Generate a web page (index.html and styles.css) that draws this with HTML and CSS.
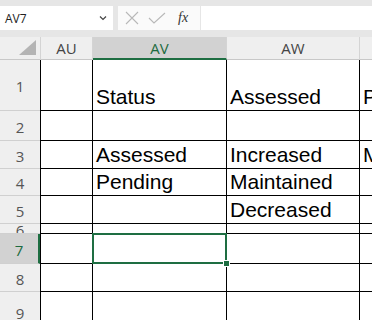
FILE: index.html
```html
<!DOCTYPE html>
<html lang="en">
<head>
    <meta charset="UTF-8">
    <title>Sheet</title>
    <link rel="stylesheet" href="styles.css">
</head>
<body>
    <div class="toolbar">
        <div class="namebox">
            <span>AV7</span>
            <svg class="chev" width="8" height="6" viewBox="0 0 8 6"><path d="M1 1.5 L4 4.5 L7 1.5" fill="none" stroke="#444" stroke-width="1.2"/></svg>
        </div>
        <div class="fxbuttons">
            <svg width="16" height="16" viewBox="0 0 16 16"><path d="M2 2 L14 14 M14 2 L2 14" stroke="#b8b8b8" stroke-width="1.1"/></svg>
            <svg width="18" height="16" viewBox="0 0 18 16"><path d="M1 8 L6 13 L17 3" fill="none" stroke="#b8b8b8" stroke-width="1.1"/></svg>
            <span class="fx">fx</span>
        </div>
        <div class="formula"></div>
    </div>

    <div class="sheet">
        <!-- column headers -->
        <div class="corner"><span class="tri"></span></div>
        <div class="ch first">AU</div>
        <div class="ch active">AV</div>
        <div class="ch">AW</div>
        <div class="ch"></div>

        <div class="rh">1</div>
        <div class="cell first"></div>
        <div class="cell">Status</div>
        <div class="cell">Assessed</div>
        <div class="cell">Previous</div>

        <div class="rh">2</div>
        <div class="cell first"></div>
        <div class="cell"></div>
        <div class="cell"></div>
        <div class="cell"></div>

        <div class="rh">3</div>
        <div class="cell first"></div>
        <div class="cell">Assessed</div>
        <div class="cell">Increased</div>
        <div class="cell">Maintained</div>

        <div class="rh">4</div>
        <div class="cell first"></div>
        <div class="cell">Pending</div>
        <div class="cell">Maintained</div>
        <div class="cell"></div>

        <div class="rh">5</div>
        <div class="cell first"></div>
        <div class="cell"></div>
        <div class="cell">Decreased</div>
        <div class="cell"></div>

        <div class="rh">6</div>
        <div class="cell first"></div>
        <div class="cell"></div>
        <div class="cell"></div>
        <div class="cell"></div>

        <div class="rh active">7</div>
        <div class="cell first"></div>
        <div class="cell selected"><span class="sel"><span class="handle"></span></span></div>
        <div class="cell"></div>
        <div class="cell"></div>

        <div class="rh">8</div>
        <div class="cell first"></div>
        <div class="cell"></div>
        <div class="cell"></div>
        <div class="cell"></div>

        <div class="rh">9</div>
        <div class="cell first"></div>
        <div class="cell"></div>
        <div class="cell"></div>
        <div class="cell"></div>
    </div>
</body>
</html>
```

FILE: styles.css
```css
body {
    margin: 0;
    background-color: #e6e6e6;
    font-family: 'Liberation Sans', Arial, sans-serif;
    overflow: hidden;
    width: 372px;
    height: 320px;
}

.toolbar {
    display: flex;
    height: 24px;
    padding: 6px 0 7px 0;
}

.namebox {
    width: 113px;
    box-sizing: border-box;
    background-color: #fff;
    display: flex;
    align-items: center;
    justify-content: space-between;
    padding: 0 6px 0 5px;
    font-family: 'Open Sans', 'Noto Sans', sans-serif;
    font-size: 12px;
    color: #222;
}

.fxbuttons {
    width: 82px;
    margin-left: 5px;
    background-color: #fafafa;
    display: flex;
    align-items: center;
    gap: 8px;
    padding-left: 6px;
    box-sizing: border-box;
}

.fx {
    font-family: 'Liberation Serif', serif;
    font-style: italic;
    font-size: 14px;
    color: #333;
    margin-left: 4px;
}

.formula {
    flex: 1;
    margin-left: 1px;
    background-color: #fff;
}

.sheet {
    display: grid;
    grid-template-columns: 40px 53px 134px 133px 1fr;
    grid-template-rows: 23px 51px 30px 28px 27px 28px 10px 30px 28px 40px;
    background-color: #fff;
}

.corner {
    background-color: #efefef;
    border-bottom: 1px solid #c8c8c8;
    position: relative;
}

.tri {
    position: absolute;
    right: 4px;
    bottom: 4px;
    width: 0;
    height: 0;
    border-left: 17px solid transparent;
    border-bottom: 15px solid #b4b4b4;
}

.ch {
    background-color: #efefef;
    border-right: 1px solid #d4d4d4;
    border-bottom: 1px solid #c8c8c8;
    display: flex;
    align-items: center;
    justify-content: center;
    font-family: 'Open Sans', 'Noto Sans', sans-serif;
    font-size: 15px;
    color: #444;
    box-sizing: border-box;
}

.ch.first {
    border-left: 1px solid #d4d4d4;
}

.ch.active {
    background-color: #d2d2d2;
    color: #1d6b40;
    border-bottom: 2px solid #1e6e42;
}

.rh {
    background-color: #efefef;
    border-bottom: 1px solid #d0d0d0;
    display: flex;
    align-items: center;
    justify-content: center;
    padding-top: 2px;
    font-family: 'Open Sans', 'Noto Sans', sans-serif;
    font-size: 15px;
    color: #555;
    overflow: hidden;
    box-sizing: border-box;
}

.rh.active {
    background-color: #d2d2d2;
    color: #1d6b40;
    border-right: 2px solid #1e6e42;
}

.cell {
    border-right: 1px solid #000;
    border-bottom: 1px solid #000;
    box-sizing: border-box;
    display: flex;
    align-items: flex-end;
    padding: 0 0 1px 3px;
    font-size: 21px;
    line-height: 24px;
    color: #000;
    white-space: nowrap;
}

.cell.first {
    border-left: 1px solid #000;
}

.cell.selected {
    position: relative;
}

.sel {
    position: absolute;
    left: -1px;
    top: -1px;
    right: -1px;
    bottom: -1px;
    border: 2px solid #1e6e42;
}

.handle {
    position: absolute;
    right: -5px;
    bottom: -5px;
    width: 5px;
    height: 5px;
    background-color: #1e6e42;
    border: 1px solid #fff;
}
```
